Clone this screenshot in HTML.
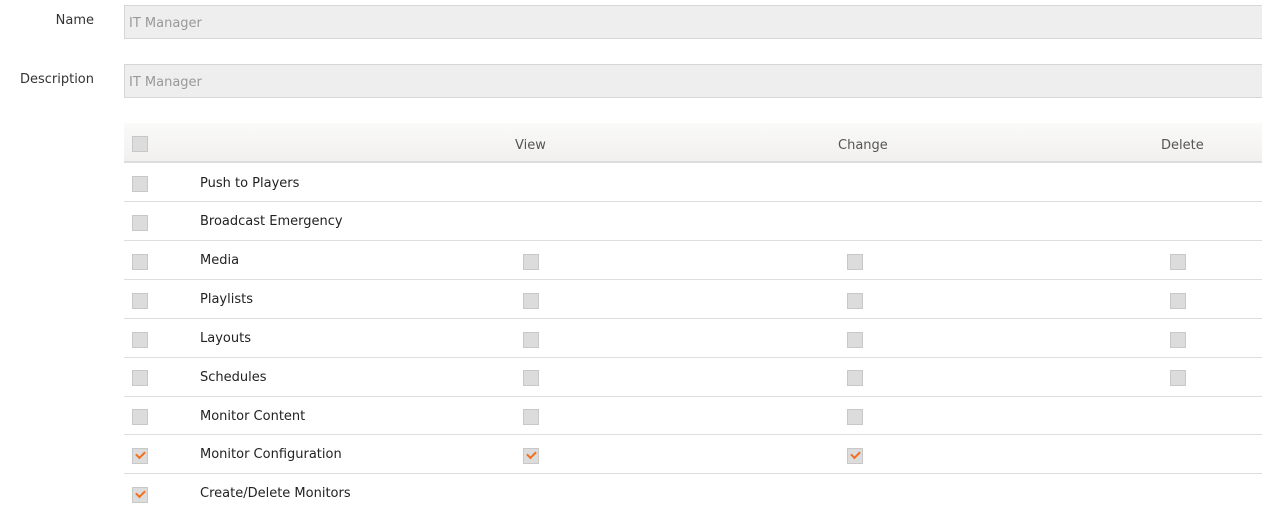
<!DOCTYPE html>
<html><head><style>
body{margin:0;width:1262px;height:524px;background:#fff;font-family:"DejaVu Sans","Liberation Sans",sans-serif;font-size:13px;color:#333;position:relative;overflow:hidden}
.a{position:absolute}
.lbl{right:1168px;text-align:right;font-size:13px;color:#333}
.inp{left:124px;width:1136px;height:32px;background:#eeeeee;border:1px solid #d6d6d6;color:#999;font-size:13px;line-height:35px;padding-left:4px;box-sizing:content-box}
.cb{width:14px;height:14px;background:#dcdcdc;border:1px solid #c8c8c8}
.line{left:124px;width:1138px;height:1px;background:#dedede}
.t{left:200px;font-size:13px;color:#222;margin-top:2px}
.h{font-size:13px;color:#555;margin-top:2px}
.ck::after{content:"";position:absolute;left:3px;top:2px;width:7px;height:4px;border-left:2px solid #f07020;border-bottom:2px solid #f07020;transform:rotate(-45deg)}
</style></head><body>
<div class="a lbl" style="top:13px">Name</div>
<div class="a inp" style="top:5px;width:1133px">IT Manager</div>
<div class="a lbl" style="top:72px">Description</div>
<div class="a inp" style="top:64px;width:1133px">IT Manager</div>
<div class="a" style="left:124px;top:123px;width:1138px;height:38px;background:linear-gradient(#fafaf9,#f1f0ee)"></div>
<div class="a" style="left:124px;top:161px;width:1138px;height:2px;background:#ddd"></div>
<div class="a cb" style="left:132px;top:136px"></div>
<div class="a h" style="left:515px;top:136px">View</div>
<div class="a h" style="left:838px;top:136px">Change</div>
<div class="a h" style="left:1161px;top:136px">Delete</div>

<div class="a line" style="top:201px"></div>
<div class="a line" style="top:240px"></div>
<div class="a line" style="top:279px"></div>
<div class="a line" style="top:318px"></div>
<div class="a line" style="top:357px"></div>
<div class="a line" style="top:396px"></div>
<div class="a line" style="top:434px"></div>
<div class="a line" style="top:473px"></div>

<div class="a cb" style="left:132px;top:176px"></div><div class="a t" style="top:174px">Push to Players</div>
<div class="a cb" style="left:132px;top:215px"></div><div class="a t" style="top:212px">Broadcast Emergency</div>

<div class="a cb" style="left:132px;top:254px"></div><div class="a t" style="top:251px">Media</div>
<div class="a cb" style="left:523px;top:254px"></div><div class="a cb" style="left:847px;top:254px"></div><div class="a cb" style="left:1170px;top:254px"></div>

<div class="a cb" style="left:132px;top:293px"></div><div class="a t" style="top:290px">Playlists</div>
<div class="a cb" style="left:523px;top:293px"></div><div class="a cb" style="left:847px;top:293px"></div><div class="a cb" style="left:1170px;top:293px"></div>

<div class="a cb" style="left:132px;top:332px"></div><div class="a t" style="top:329px">Layouts</div>
<div class="a cb" style="left:523px;top:332px"></div><div class="a cb" style="left:847px;top:332px"></div><div class="a cb" style="left:1170px;top:332px"></div>

<div class="a cb" style="left:132px;top:370px"></div><div class="a t" style="top:368px">Schedules</div>
<div class="a cb" style="left:523px;top:370px"></div><div class="a cb" style="left:847px;top:370px"></div><div class="a cb" style="left:1170px;top:370px"></div>

<div class="a cb" style="left:132px;top:409px"></div><div class="a t" style="top:407px">Monitor Content</div>
<div class="a cb" style="left:523px;top:409px"></div><div class="a cb" style="left:847px;top:409px"></div>

<div class="a cb ck" style="left:132px;top:448px"></div><div class="a t" style="top:445px">Monitor Configuration</div>
<div class="a cb ck" style="left:523px;top:448px"></div><div class="a cb ck" style="left:847px;top:448px"></div>

<div class="a cb ck" style="left:132px;top:487px"></div><div class="a t" style="top:484px">Create/Delete Monitors</div>
</body></html>
